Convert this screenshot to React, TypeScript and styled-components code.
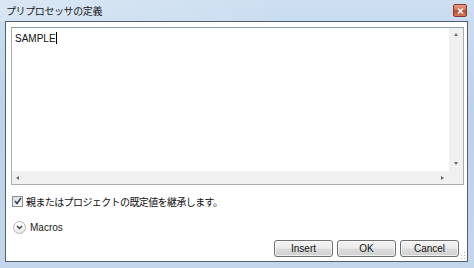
import styled, { createGlobalStyle } from "styled-components";

const GlobalStyle = createGlobalStyle`
  html, body {
    margin: 0;
    padding: 0;
    background: #ffffff;
  }
  body {
    font-family: "Liberation Sans", "Noto Sans CJK JP", sans-serif;
  }
`;

const Window = styled.div`
  width: 474px;
  height: 268px;
  display: flex;
  flex-direction: column;
  box-sizing: border-box;
  background: linear-gradient(to bottom, #cddff1 0%, #bcd2ea 40%, #c3d6ec 100%);
`;

const TitleBar = styled.div`
  height: 21px;
  display: flex;
  align-items: center;
  padding: 0 7px 0 6px;
  box-sizing: border-box;
  background: linear-gradient(to right, rgba(255, 255, 255, 0.25), rgba(255, 255, 255, 0) 60%);
`;

const Title = styled.span`
  font-family: "Noto Sans CJK JP", sans-serif;
  font-size: 10px;
  letter-spacing: -0.4px;
  color: #1a1a1a;
`;

const CloseButton = styled.div`
  margin-left: auto;
  width: 14px;
  height: 13px;
  border-radius: 2px;
  border: 1px solid #8a3a2e;
  box-sizing: border-box;
  background: linear-gradient(to bottom, #e8a08a 0%, #d56a50 45%, #c0452c 55%, #d8785a 100%);
  display: flex;
  align-items: center;
  justify-content: center;
`;

const Client = styled.div`
  position: relative;
  flex: 1;
  margin: 0 6px 6px 5px;
  border: 1px solid #4f6072;
  background: #ffffff;
  display: flex;
  flex-direction: column;
  padding: 5px 3px 3px 5px;
`;

const Editor = styled.div`
  height: 158px;
  box-sizing: border-box;
  border: 1px solid #abadb3;
  border-top-color: #8e9aa8;
  display: grid;
  grid-template-columns: 1fr 14px;
  grid-template-rows: 1fr 13px;
`;

const TextArea = styled.div`
  padding: 5px 0 0 3px;
  font-size: 10px;
  color: #111111;
  display: flex;
  align-items: flex-start;
`;

const Caret = styled.span`
  display: inline-block;
  width: 1px;
  height: 12px;
  margin-top: -1px;
  background: #000000;
`;

const ScrollTrack = styled.div<{ $vertical?: boolean }>`
  background: #f0f0f0;
  display: flex;
  flex-direction: ${(p) => (p.$vertical ? "column" : "row")};
  justify-content: space-between;
  align-items: center;
  padding: ${(p) => (p.$vertical ? "5px 0 5px 0" : "0 4px 0 4px")};
`;

const Corner = styled.div`
  background: #f0f0f0;
`;

const CheckRow = styled.label`
  display: flex;
  align-items: center;
  margin-top: 10px;
  height: 12px;
  padding-left: 1px;
`;

const CheckBox = styled.span`
  width: 11px;
  height: 11px;
  box-sizing: border-box;
  border: 1px solid #8e8f8f;
  background: linear-gradient(135deg, #dcdcdc, #fbfbfb);
  display: flex;
  align-items: center;
  justify-content: center;
`;

const Label = styled.span`
  margin-left: 3px;
  font-family: "Noto Sans CJK JP", sans-serif;
  font-size: 10px;
  letter-spacing: -0.6px;
  color: #111111;
`;

const MacrosRow = styled.div`
  display: flex;
  align-items: center;
  margin-top: 12px;
  padding-left: 2px;
  height: 16px;
`;

const Expander = styled.span`
  width: 13px;
  height: 13px;
  box-sizing: border-box;
  border-radius: 50%;
  border: 1px solid #b4b4b4;
  background: linear-gradient(to bottom, #ffffff, #ececec);
  display: flex;
  align-items: center;
  justify-content: center;
`;

const MacrosText = styled.span`
  margin-left: 4px;
  font-size: 10px;
  color: #1a1a1a;
`;

const ButtonRow = styled.div`
  display: flex;
  justify-content: flex-end;
  gap: 4px;
  margin-top: auto;
  padding-right: 5px;
  padding-bottom: 1px;
`;

const Button = styled.button`
  width: 59px;
  height: 17px;
  padding: 0;
  box-sizing: border-box;
  border: 1px solid #707070;
  border-radius: 3px;
  background: linear-gradient(to bottom, #f3f3f3 0%, #ebebeb 48%, #dddddd 52%, #cfcfcf 100%);
  box-shadow: inset 0 0 0 1px rgba(255, 255, 255, 0.7);
  font-family: "Liberation Sans", sans-serif;
  font-size: 10px;
  color: #111111;
`;

const Grip = styled.svg`
  position: absolute;
  right: 1px;
  bottom: 1px;
`;

const Arrow = ({ dir }: { dir: "up" | "down" | "left" | "right" }) => {
  const pts = {
    up: "0,3 2,0 4,3",
    down: "0,0 4,0 2,3",
    left: "3,0 3,4 0,2",
    right: "0,0 3,2 0,4",
  }[dir];
  return (
    <svg width="4" height="4" viewBox="0 0 4 4">
      <polygon points={pts} fill="#6a6a6a" />
    </svg>
  );
};

export default function App() {
  return (
    <>
      <GlobalStyle />
      <Window>
        <TitleBar>
          <Title>プリプロセッサの定義</Title>
          <CloseButton>
            <svg width="7" height="6" viewBox="0 0 7 6">
              <path d="M1 0.5 L6 5.5 M6 0.5 L1 5.5" stroke="#ffffff" strokeWidth="1.6" />
            </svg>
          </CloseButton>
        </TitleBar>
        <Client>
          <Editor>
            <TextArea>
              SAMPLE
              <Caret />
            </TextArea>
            <ScrollTrack $vertical>
              <Arrow dir="up" />
              <Arrow dir="down" />
            </ScrollTrack>
            <ScrollTrack>
              <Arrow dir="left" />
              <Arrow dir="right" />
            </ScrollTrack>
            <Corner />
          </Editor>
          <CheckRow>
            <CheckBox>
              <svg width="8" height="8" viewBox="0 0 8 8">
                <path d="M1 4 L3 6.5 L7 1" stroke="#2a3a5a" strokeWidth="1.4" fill="none" />
              </svg>
            </CheckBox>
            <Label>親またはプロジェクトの既定値を継承します。</Label>
          </CheckRow>
          <MacrosRow>
            <Expander>
              <svg width="7" height="5" viewBox="0 0 7 5">
                <path d="M1 1 L3.5 3.5 L6 1" stroke="#3c3c3c" strokeWidth="1.3" fill="none" />
              </svg>
            </Expander>
            <MacrosText>Macros</MacrosText>
          </MacrosRow>
          <ButtonRow>
            <Button>Insert</Button>
            <Button>OK</Button>
            <Button>Cancel</Button>
          </ButtonRow>
          <Grip width="7" height="9" viewBox="0 0 7 9">
            <rect x="5" y="1" width="1" height="1" fill="#b8b8b8" />
            <rect x="5" y="4" width="1" height="1" fill="#b8b8b8" />
            <rect x="2" y="4" width="1" height="1" fill="#b8b8b8" />
            <rect x="5" y="7" width="1" height="1" fill="#b8b8b8" />
            <rect x="2" y="7" width="1" height="1" fill="#b8b8b8" />
          </Grip>
        </Client>
      </Window>
    </>
  );
}
